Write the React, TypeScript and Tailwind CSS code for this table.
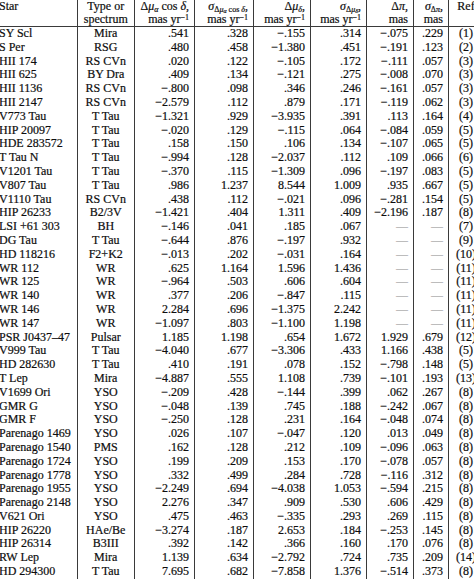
import React from "react";

type Row = [string, string, string, string, string, string, string, string, string];

const M = "\u2212";
const D = "\u2014";

const raw: string[] = [
  "SY Scl|Mira|.541|.328|-.155|.314|-.075|.229|(1)",
  "S Per|RSG|.480|.458|-1.380|.451|-.191|.123|(2)",
  "HII 174|RS CVn|.020|.122|-.105|.172|-.111|.057|(3)",
  "HII 625|BY Dra|.409|.134|-.121|.275|-.008|.070|(3)",
  "HII 1136|RS CVn|-.800|.098|.346|.246|-.161|.057|(3)",
  "HII 2147|RS CVn|-2.579|.112|.879|.171|-.119|.062|(3)",
  "V773 Tau|T Tau|-1.321|.929|-3.935|.391|.113|.164|(4)",
  "HIP 20097|T Tau|-.020|.129|-.115|.064|-.084|.059|(5)",
  "HDE 283572|T Tau|.158|.150|.106|.134|-.107|.065|(5)",
  "T Tau N|T Tau|-.994|.128|-2.037|.112|.109|.066|(6)",
  "V1201 Tau|T Tau|-.370|.115|-1.309|.096|-.197|.083|(5)",
  "V807 Tau|T Tau|.986|1.237|8.544|1.009|.935|.667|(5)",
  "V1110 Tau|RS CVn|.438|.112|-.021|.096|-.281|.154|(5)",
  "HIP 26233|B2/3V|-1.421|.404|1.311|.409|-2.196|.187|(8)",
  "LSI +61 303|BH|-.146|.041|.185|.067|#|#|(7)",
  "DG Tau|T Tau|-.644|.876|-.197|.932|#|#|(9)",
  "HD 118216|F2+K2|-.013|.202|-.031|.164|#|#|(10)",
  "WR 112|WR|.625|1.164|1.596|1.436|#|#|(11)",
  "WR 125|WR|-.964|.503|.606|.604|#|#|(11)",
  "WR 140|WR|.377|.206|-.847|.115|#|#|(11)",
  "WR 146|WR|2.284|.696|-1.375|2.242|#|#|(11)",
  "WR 147|WR|-1.097|.803|-1.100|1.198|#|#|(11)",
  "PSR J0437\u201347|Pulsar|1.185|1.198|.654|1.672|1.929|.679|(12)",
  "V999 Tau|T Tau|-4.040|.677|-3.306|.433|1.166|.438|(5)",
  "HD 282630|T Tau|.410|.191|.078|.152|-.798|.148|(5)",
  "T Lep|Mira|-4.887|.555|1.108|.739|-.101|.193|(13)",
  "V1699 Ori|YSO|-.209|.428|-.144|.399|.062|.267|(8)",
  "GMR G|YSO|-.048|.139|.745|.188|-.242|.067|(8)",
  "GMR F|YSO|-.250|.128|.231|.164|-.048|.074|(8)",
  "Parenago 1469|YSO|.026|.107|-.047|.120|.013|.049|(8)",
  "Parenago 1540|PMS|.162|.128|.212|.109|-.096|.063|(8)",
  "Parenago 1724|YSO|.199|.209|.153|.170|-.078|.057|(8)",
  "Parenago 1778|YSO|.332|.499|.284|.728|-.116|.312|(8)",
  "Parenago 1955|YSO|-2.249|.694|-4.038|1.053|-.594|.215|(8)",
  "Parenago 2148|YSO|2.276|.347|.909|.530|.606|.429|(8)",
  "V621 Ori|YSO|.475|.463|-.335|.293|.269|.115|(8)",
  "HIP 26220|HAe/Be|-3.274|.187|2.653|.184|-.253|.145|(8)",
  "HIP 26314|B3III|.392|.142|.366|.160|.170|.076|(8)",
  "RW Lep|Mira|1.139|.634|-2.792|.724|.735|.209|(14)",
  "HD 294300|T Tau|7.695|.682|-7.858|1.376|-.514|.373|(8)",
];

const rows: Row[] = raw.map((r) => r.split("|").map((c) => c.replace(/-/g, M)) as Row);

const grid =
  "grid grid-cols-[78px_56.5px_60.5px_59px_57px_56px_47px_35px_34px]";

const line = "border-r border-[#3a3a3a]";

function Cell({
  children,
  align,
  last,
}: {
  children: React.ReactNode;
  align: "l" | "c" | "r";
  last?: boolean;
}) {
  const a =
    align === "l"
      ? "text-left"
      : align === "c"
        ? "text-center"
        : "text-right pr-[5px]";
  return (
    <div className={`${a} ${last ? "" : line} whitespace-nowrap`}>
      {children}
    </div>
  );
}

function I({ children }: { children: React.ReactNode }) {
  return <span className="italic">{children}</span>;
}

function Sub({ children }: { children: React.ReactNode }) {
  return (
    <span className="relative top-[2px] text-[8px] leading-none">{children}</span>
  );
}

const MasYr = () => (
  <span>
    mas yr
    <span className="relative top-[-3px] text-[8px] leading-none">{M}1</span>
  </span>
);

export default function App() {
  return (
    <div
      className="w-[474px] h-[579px] overflow-hidden bg-white text-[#0d0d0d] text-[12px] [-webkit-text-stroke:0.2px_#0d0d0d]"
      style={{ fontFamily: '"Liberation Serif", "Times New Roman", serif' }}
    >
      <div className="w-[482px]">
        <div className={`${grid} h-[27px] border-b border-[#3a3a3a] leading-[13px]`}>
          <Cell align="l">
            <div className="indent-[-1px]">Star</div>
          </Cell>
          <Cell align="c">
            <div>Type or</div>
            <div>spectrum</div>
          </Cell>
          <Cell align="r">
            <div>
              &Delta;<I>&mu;</I>
              <Sub>
                <I>&alpha;</I>
              </Sub>{" "}
              cos <I>&delta;</I>,
            </div>
            <div>
              <MasYr />
            </div>
          </Cell>
          <Cell align="r">
            <div>
              <I>&sigma;</I>
              <Sub>
                &Delta;<I>&mu;</I>
                <span className="relative top-[1px] text-[6px] italic">&alpha;</span> cos{" "}
                <I>&delta;</I>
              </Sub>
              ,
            </div>
            <div>
              <MasYr />
            </div>
          </Cell>
          <Cell align="r">
            <div>
              &Delta;<I>&mu;</I>
              <Sub>
                <I>&delta;</I>
              </Sub>
              ,
            </div>
            <div>
              <MasYr />
            </div>
          </Cell>
          <Cell align="r">
            <div>
              <I>&sigma;</I>
              <Sub>
                &Delta;<I>&mu;</I>
                <span className="relative top-[1px] text-[6px] italic">&delta;</span>
              </Sub>
              ,
            </div>
            <div>
              <MasYr />
            </div>
          </Cell>
          <Cell align="r">
            <div>
              &Delta;<I>&pi;</I>,
            </div>
            <div>mas</div>
          </Cell>
          <Cell align="r">
            <div>
              <I>&sigma;</I>
              <Sub>
                &Delta;<I>&pi;</I>
              </Sub>
              ,
            </div>
            <div>mas</div>
          </Cell>
          <Cell align="c" last>
            <div>Ref</div>
          </Cell>
        </div>
        {rows.map((r, i) => (
          <div key={i} className={`${grid} h-[13.8px] leading-[13.8px]`}>
            <Cell align="l">
              <div className="indent-[-1px]">{r[0]}</div>
            </Cell>
            <Cell align="c">{r[1]}</Cell>
            <Cell align="r">{r[2]}</Cell>
            <Cell align="r">{r[3]}</Cell>
            <Cell align="r">{r[4]}</Cell>
            <Cell align="r">{r[5]}</Cell>
            <Cell align="r">
              {r[6] === "#" ? (
                <span className="text-[#888] [-webkit-text-stroke:0px]">{D}</span>
              ) : (
                r[6]
              )}
            </Cell>
            <Cell align="r">
              {r[7] === "#" ? (
                <span className="text-[#888] [-webkit-text-stroke:0px]">{D}</span>
              ) : (
                r[7]
              )}
            </Cell>
            <Cell align="c" last>
              {r[8]}
            </Cell>
          </div>
        ))}
      </div>
    </div>
  );
}
